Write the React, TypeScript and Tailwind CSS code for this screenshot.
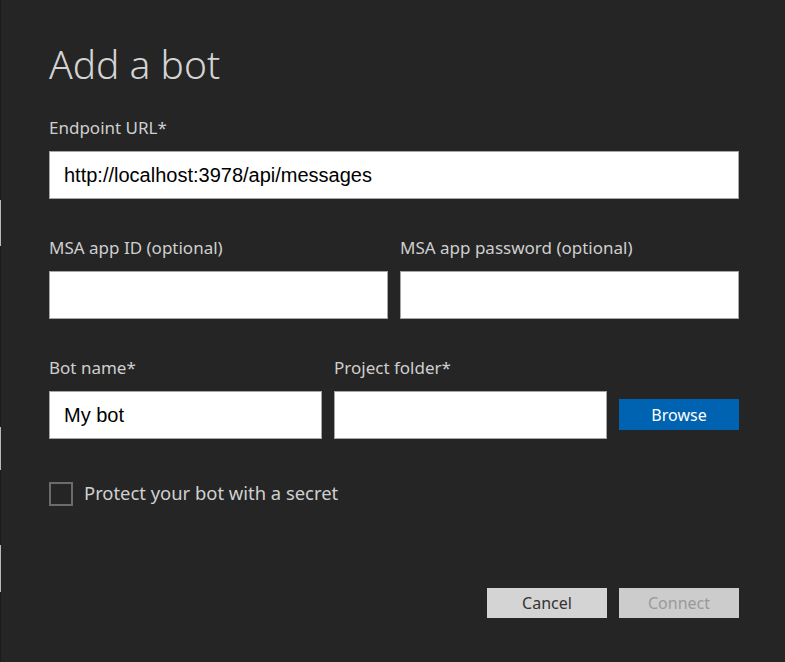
import React from "react";

const ui = { fontFamily: '"Noto Sans", "Open Sans", sans-serif' };
const field = { fontFamily: '"Liberation Sans", Arial, sans-serif' };

function Label({ children }: { children: React.ReactNode }) {
  return (
    <div className="h-[24px] text-[17px] leading-[24px] text-[#cfcfcf]" style={ui}>
      {children}
    </div>
  );
}

function TextBox({ value, className = "" }: { value?: string; className?: string }) {
  return (
    <div
      className={
        "flex h-[48px] items-center border border-[#a6a6a6] bg-white px-[14px] text-[20px] text-black " +
        className
      }
      style={field}
    >
      {value}
    </div>
  );
}

export default function App() {
  return (
    <div className="flex h-[662px] w-[785px] bg-[#252525]">
      {/* sliver of the window behind */}
      <div className="flex w-px shrink-0 flex-col bg-[#1c1c1c]">
        <div className="mt-[200px] h-[46px] bg-[#b9b9b9]" />
        <div className="mt-[181px] h-[43px] bg-[#b9b9b9]" />
        <div className="mt-[75px] h-[47px] bg-[#b9b9b9]" />
      </div>

      <div className="flex flex-1 flex-col pl-[48px] pr-[46px]" style={ui}>
        <h1 className="mt-[36px] h-[56px] text-[39px] font-light leading-[56px] text-[#d4d4d4]">
          Add a bot
        </h1>

        <div className="mt-[24px]">
          <Label>Endpoint URL*</Label>
        </div>
        <div className="mt-[11px]">
          <TextBox value="http://localhost:3978/api/messages" />
        </div>

        <div className="mt-[37px] grid grid-cols-2 gap-x-[12px]">
          <div>
            <Label>MSA app ID (optional)</Label>
            <TextBox className="mt-[11px]" />
          </div>
          <div>
            <Label>MSA app password (optional)</Label>
            <TextBox className="mt-[11px]" />
          </div>
        </div>

        <div className="mt-[37px] flex gap-x-[12px]">
          <div className="w-[273px]">
            <Label>Bot name*</Label>
            <TextBox className="mt-[11px]" value="My bot" />
          </div>
          <div className="w-[273px]">
            <Label>Project folder*</Label>
            <TextBox className="mt-[11px]" />
          </div>
          <div className="flex w-[120px] flex-col">
            <button className="mt-[43px] h-[31px] bg-[#0063b1] text-[16px] text-white" style={ui}>
              Browse
            </button>
          </div>
        </div>

        <label className="mt-[43px] flex items-center gap-[11px]">
          <span className="h-[24px] w-[24px] border-2 border-[#6b6b6b]" />
          <span className="-mt-[3px] text-[18.4px] leading-[24px] text-[#d0d0d0]">
            Protect your bot with a secret
          </span>
        </label>

        <div className="mt-[82px] flex justify-end gap-x-[12px]">
          <button className="h-[30px] w-[120px] bg-[#d4d4d4] text-[16px] text-[#333333]" style={ui}>
            Cancel
          </button>
          <button className="h-[30px] w-[120px] bg-[#cccccc] text-[16px] text-[#9a9a9a]" style={ui} disabled>
            Connect
          </button>
        </div>
      </div>
    </div>
  );
}
